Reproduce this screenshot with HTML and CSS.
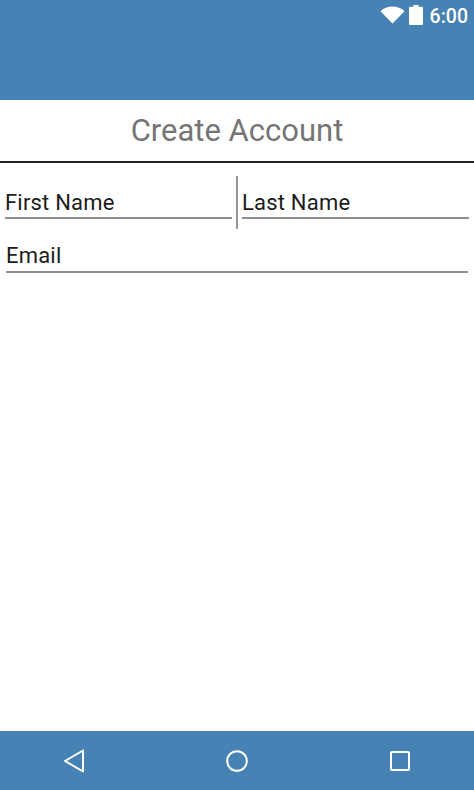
FILE: index.html
```html
<!DOCTYPE html>
<html lang="en">
<head>
<meta charset="utf-8">
<title>Create Account</title>
<link rel="stylesheet" href="styles.css">
</head>
<body>
<div class="screen">
  <header class="app-header">
    <div class="status">
      <svg class="wifi" width="25" height="18" viewBox="0 0 25 18"><path d="M0.500 5.200C3.800 2.200 7.900 0.600 12.500 0.600s8.700 1.600 12 4.600L12.500 17.600z" fill="#fff"/></svg>
      <svg class="battery" width="14" height="20" viewBox="0 0 14 20"><path d="M4.500 0h5v1.800H13a1 1 0 0 1 1 1V19a1 1 0 0 1-1 1H1a1 1 0 0 1-1-1V2.800a1 1 0 0 1 1-1h3.500z" fill="#fff"/></svg>
      <span class="time">6:00</span>
    </div>
  </header>
  <h1 class="title">Create Account</h1>
  <main class="form">
    <div class="name-row">
      <div class="field field-first">First Name</div>
      <div class="divider"></div>
      <div class="field field-last">Last Name</div>
    </div>
    <div class="field field-email">Email</div>
  </main>
  <nav class="nav-bar">
    <svg width="22" height="24" viewBox="0 0 22 24"><path d="M21 1.500L3 12l18 10.500z" fill="none" stroke="#fff" stroke-width="2" stroke-linejoin="round"/></svg>
    <svg width="22" height="22" viewBox="0 0 22 22"><circle cx="11" cy="11" r="9.800" fill="none" stroke="#fff" stroke-width="2"/></svg>
    <svg width="20" height="20" viewBox="0 0 20 20"><rect x="1" y="1" width="18" height="18" rx="1" fill="none" stroke="#fff" stroke-width="2"/></svg>
  </nav>
</div>
</body>
</html>
```
FILE: styles.css
```css
* { box-sizing: border-box; }
html, body { margin: 0; padding: 0; }
body { font-family: Roboto, "Liberation Sans", sans-serif; background: #fff; }
.screen { width: 474px; height: 790px; display: flex; flex-direction: column; overflow: hidden; }
.app-header { height: 100px; background: #4682b4; flex: none; }
.status { height: 30px; display: flex; align-items: center; justify-content: flex-end; padding-right: 6px; color: #fff; }
.wifi { margin-right: 4px; }
.battery { margin-right: 7px; }
.time { font-size: 19.500px; font-weight: 500; line-height: 30px; margin-top: 3px; }
.title { margin: 0; height: 63px; border-bottom: 2px solid #222; font-size: 31px; font-weight: 400; line-height: 61px; text-align: center; color: #757575; flex: none; }
.form { flex: 1; display: flex; flex-direction: column; padding-top: 13px; }
.name-row { display: flex; height: 53px; padding: 0 5px; }
.field { font-size: 22px; letter-spacing: 0.200px; line-height: 26px; color: #1c1c1c; border-bottom: 2px solid #8e8e8e; }
.field-first, .field-last { width: 227px; height: 43px; padding-top: 14px; }
.divider { width: 2px; height: 53px; margin: 0 4px; background: #969696; flex: none; }
.field-email { height: 44px; margin: 0 6px; padding: 14px 0 0; width: 462px; }
.nav-bar { height: 59px; background: #4682b4; flex: none; display: flex; align-items: center; justify-content: space-between; padding: 0 64px 0 62px; }
```
